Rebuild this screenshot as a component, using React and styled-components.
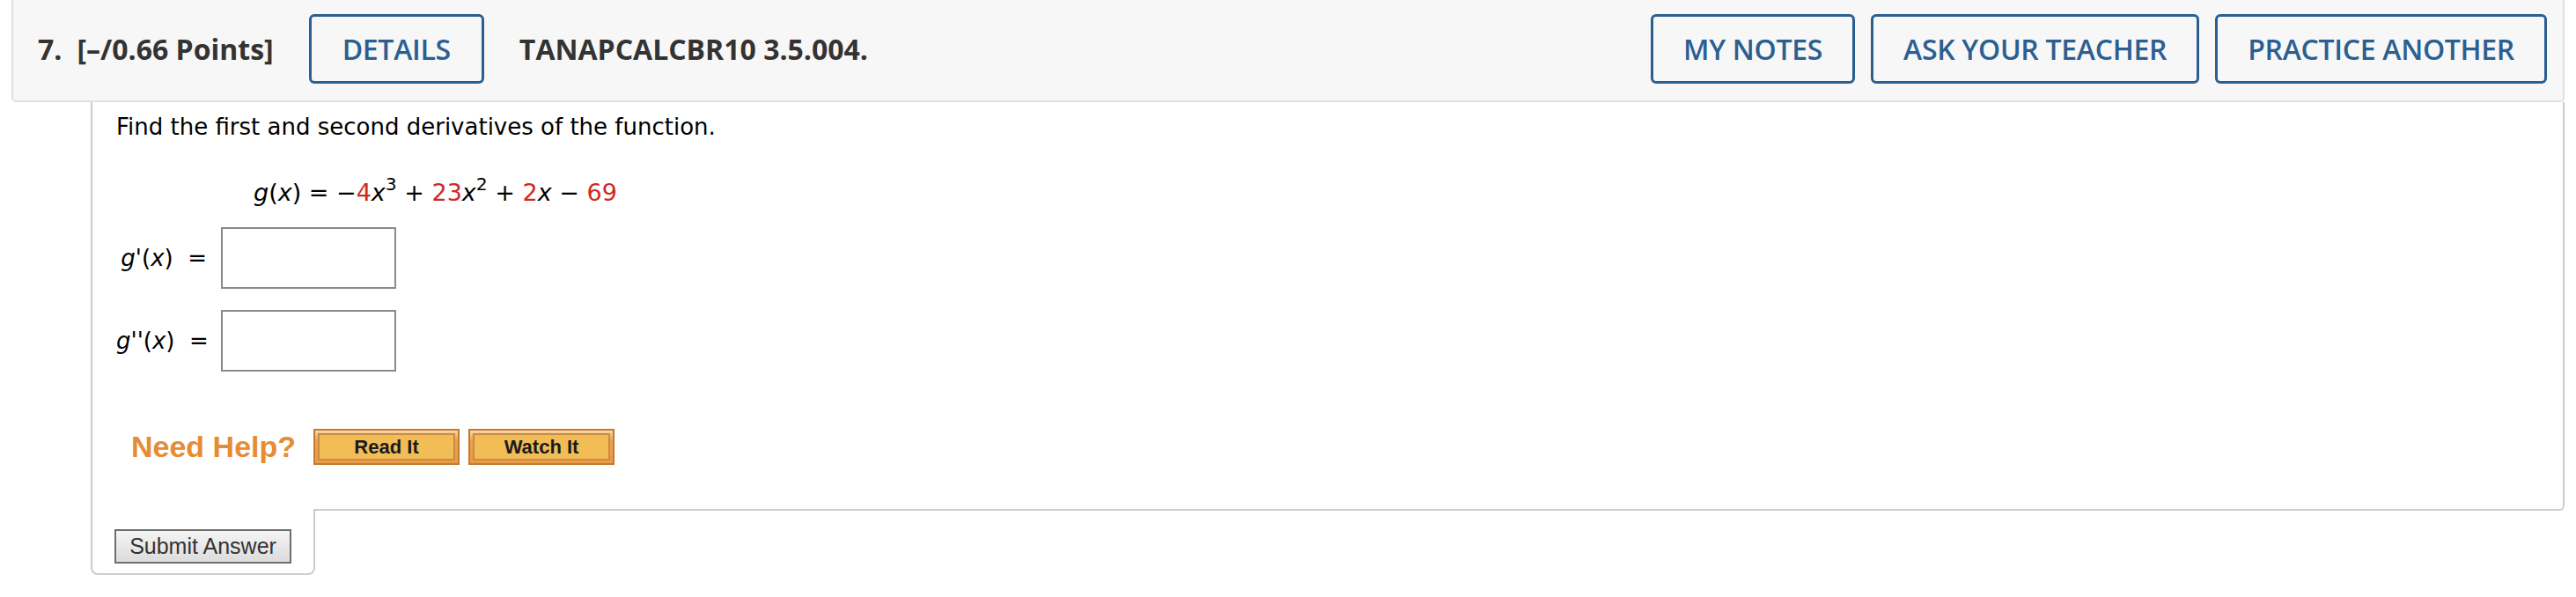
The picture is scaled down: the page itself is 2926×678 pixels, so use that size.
import React from "react";
import styled, { createGlobalStyle } from "styled-components";

const Global = createGlobalStyle`
  html, body { margin: 0; padding: 0; background: #ffffff; }
  body { font-family: "DejaVu Sans", Verdana, sans-serif; color: #000; }
`;

const Page = styled.div`
  padding: 0 13px;
`;

const Header = styled.header`
  display: flex;
  align-items: flex-start;
  height: 116px;
  box-sizing: border-box;
  padding: 16px 18px 0 28px;
  background: #f7f7f7;
  border: 2px solid #e1e1e1;
  border-top: none;
  border-radius: 0 0 5px 5px;
  font-family: "Open Sans", sans-serif;
  color: #333333;
`;

const Title = styled.div`
  display: flex;
  align-items: center;
  height: 79px;
  font-size: 32px;
  font-weight: 700;
  gap: ${(p) => p.$gap || 0}px;
  margin-right: ${(p) => p.$mr || 0}px;
`;

const OutlineButton = styled.button`
  height: 79px;
  box-sizing: border-box;
  padding: 0 ${(p) => p.$pad || 34}px;
  border: 3px solid #2b5f92;
  border-radius: 6px;
  background: transparent;
  color: #2b5f92;
  font-family: "Open Sans", sans-serif;
  font-size: 32px;
  font-weight: 600;
  letter-spacing: -0.3px;
  margin-right: ${(p) => p.$mr || 0}px;
  cursor: pointer;
`;

const RightGroup = styled.div`
  margin-left: auto;
  display: flex;
  gap: 18px;
`;

const QuestionBox = styled.section`
  margin-left: 90px;
  border: 2px solid #cccccc;
  border-top: none;
  border-radius: 0 0 6px 0;
  padding: 13px 27px 50px 27px;
`;

const Prompt = styled.p`
  margin: 0;
  font-size: 26px;
  line-height: 30px;
`;

const Equation = styled.div`
  margin: 45px 0 0 156px;
  font-size: 27px;
  line-height: 30px;
  white-space: pre;
`;

const Var = styled.i`
  font-style: italic;
`;

const Red = styled.span`
  color: #d0291f;
`;

const Sup = styled.sup`
  font-size: 0.75em;
  line-height: 0;
  vertical-align: 0.6em;
`;

const AnswerRow = styled.div`
  display: flex;
  align-items: center;
  margin-top: 24px;
`;

const AnswerLabel = styled.div`
  width: 103px;
  text-align: right;
  font-size: 26px;
  white-space: pre;
  margin-right: 16px;
`;

const AnswerInput = styled.input`
  width: 199px;
  height: 70px;
  box-sizing: border-box;
  border: 2px solid #8a8a8a;
  background: #fff;
  padding: 0 8px;
  font-size: 24px;
`;

const HelpRow = styled.div`
  display: flex;
  align-items: center;
  margin-top: 65px;
  padding-left: 17px;
`;

const HelpText = styled.span`
  font-family: "Liberation Sans", Arial, sans-serif;
  font-weight: 700;
  font-size: 34px;
  color: #e68c34;
  margin-right: 20px;
`;

const HelpButton = styled.button`
  width: 166px;
  height: 41px;
  box-sizing: border-box;
  margin-right: 10px;
  padding: 3px;
  border: 2px solid #c27a33;
  background: linear-gradient(#f8d7a6, #f0a24c 30%, #eb9a45);
  cursor: pointer;
`;

const HelpInner = styled.span`
  display: flex;
  align-items: center;
  justify-content: center;
  height: 100%;
  box-sizing: border-box;
  border: 2px solid #c88b44;
  background: #f2bc57;
  font-family: "Liberation Sans", Arial, sans-serif;
  font-weight: 700;
  font-size: 22px;
  color: #1a1a1a;
`;

const SubmitTab = styled.div`
  position: relative;
  width: 255px;
  box-sizing: border-box;
  margin: -2px 0 0 90px;
  padding: 23px 24px 11px 25px;
  background: #fff;
  border: 2px solid #cccccc;
  border-top: none;
  border-radius: 0 0 8px 8px;
`;

const SubmitButton = styled.button`
  width: 201px;
  height: 39px;
  box-sizing: border-box;
  padding: 0;
  border: 2px solid #6e6e6e;
  background: linear-gradient(#f4f4f4, #dcdcdc);
  font-family: "Liberation Sans", Arial, sans-serif;
  font-size: 25px;
  color: #333;
  cursor: pointer;
`;

export default function App() {
  return (
    <Page>
      <Global />
      <Header>
        <Title $gap={17} $mr={40}>
          <span>7.</span>
          <span>[–/0.66 Points]</span>
        </Title>
        <OutlineButton $pad={35} $mr={40}>DETAILS</OutlineButton>
        <Title>TANAPCALCBR10 3.5.004.</Title>
        <RightGroup>
          <OutlineButton>MY NOTES</OutlineButton>
          <OutlineButton>ASK YOUR TEACHER</OutlineButton>
          <OutlineButton>PRACTICE ANOTHER</OutlineButton>
        </RightGroup>
      </Header>
      <QuestionBox>
        <Prompt>Find the first and second derivatives of the function.</Prompt>
        <Equation>
          <Var>g</Var>(<Var>x</Var>) = −<Red>4</Red><Var>x</Var><Sup>3</Sup> + <Red>23</Red>
          <Var>x</Var><Sup>2</Sup> + <Red>2</Red><Var>x</Var> − <Red>69</Red>
        </Equation>
        <AnswerRow>
          <AnswerLabel><Var>g</Var>'(<Var>x</Var>)  =</AnswerLabel>
          <AnswerInput type="text" />
        </AnswerRow>
        <AnswerRow>
          <AnswerLabel><Var>g</Var>''(<Var>x</Var>)  =</AnswerLabel>
          <AnswerInput type="text" />
        </AnswerRow>
        <HelpRow>
          <HelpText>Need Help?</HelpText>
          <HelpButton><HelpInner>Read It</HelpInner></HelpButton>
          <HelpButton><HelpInner>Watch It</HelpInner></HelpButton>
        </HelpRow>
      </QuestionBox>
      <SubmitTab>
        <SubmitButton>Submit Answer</SubmitButton>
      </SubmitTab>
    </Page>
  );
}
